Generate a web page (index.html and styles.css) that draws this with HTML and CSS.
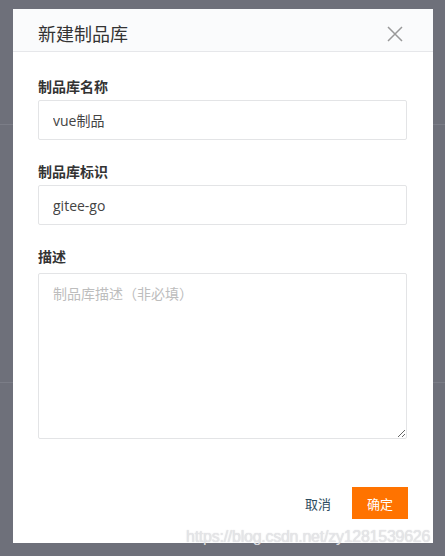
FILE: index.html
```html
<!DOCTYPE html>
<html lang="zh-CN">
<head>
<meta charset="utf-8">
<title>新建制品库</title>
<link rel="stylesheet" href="styles.css">
</head>
<body>
<div class="backdrop">
  <div class="bg-line bg-line-1"></div>
  <div class="bg-line bg-line-2"></div>
  <div class="modal">
    <div class="modal-header">
      <span class="modal-title">新建制品库</span>
      <span class="close" aria-label="关闭">
        <svg width="16" height="16" viewBox="0 0 16 16"><path d="M1 1L15 15M15 1L1 15" stroke="#999" stroke-width="1.5" fill="none"/></svg>
      </span>
    </div>
    <div class="modal-body">
      <div class="field">
        <label class="label">制品库名称</label>
        <input class="input" type="text" value="vue制品">
      </div>
      <div class="field">
        <label class="label">制品库标识</label>
        <input class="input" type="text" value="gitee-go">
      </div>
      <div class="field">
        <label class="label label-desc">描述</label>
        <textarea class="textarea" placeholder="制品库描述（非必填）"></textarea>
      </div>
    </div>
    <div class="modal-footer">
      <button class="btn btn-cancel">取消</button>
      <button class="btn btn-ok">确定</button>
    </div>
  </div>
  <div class="watermark">https://blog.csdn.net/zy1281539626</div>
</div>
</body>
</html>
```
FILE: styles.css
```css
html, body {
  margin: 0;
  padding: 0;
}
body {
  font-family: "Open Sans", "Noto Sans CJK SC", sans-serif;
  width: 445px;
  height: 556px;
  overflow: hidden;
}
.backdrop {
  position: relative;
  width: 445px;
  height: 556px;
  background: #6e707a;
  padding: 9px 0 0 13px;
  box-sizing: border-box;
}
.bg-line {
  position: absolute;
  left: 0;
  right: 0;
  height: 1px;
  background: #7b7d87;
}
.bg-line-1 { top: 124px; }
.bg-line-2 { top: 382px; }
.modal {
  position: relative;
  width: 420px;
  height: 534px;
  background: #fff;
  display: flex;
  flex-direction: column;
}
.modal-header {
  height: 43px;
  box-sizing: border-box;
  padding: 7px 30px 0 25px;
  background: #fafbfc;
  border-bottom: 1px solid #e6e7ea;
  display: flex;
  align-items: center;
  justify-content: space-between;
}
.modal-title {
  font-size: 18px;
  color: #333;
  line-height: 24px;
}
.close {
  display: flex;
  width: 16px;
  height: 16px;
}
.modal-body {
  padding: 25px 26px 0 25px;
  flex: 1;
}
.field {
  display: flex;
  flex-direction: column;
  margin-bottom: 22px;
}
.label {
  font-size: 14px;
  font-weight: bold;
  color: #333;
  line-height: 20px;
  margin-bottom: 3px;
}
.label-desc {
  margin-bottom: 6px;
}
.input {
  height: 40px;
  box-sizing: border-box;
  border: 1px solid #e3e4e6;
  border-radius: 2px;
  padding: 0 14px;
  font-family: "Open Sans", "Noto Sans CJK SC", sans-serif;
  font-size: 14px;
  color: #444;
  outline: none;
}
.textarea {
  height: 166px;
  box-sizing: border-box;
  border: 1px solid #e3e4e6;
  border-radius: 2px;
  padding: 9px 14px;
  font-family: "Open Sans", "Noto Sans CJK SC", sans-serif;
  font-size: 14px;
  color: #444;
  outline: none;
  resize: vertical;
}
.textarea::placeholder {
  color: #bdbdbd;
}
.modal-footer {
  display: flex;
  justify-content: flex-end;
  align-items: center;
  gap: 12px;
  padding: 0 25px 24px;
}
.btn {
  height: 32px;
  border: none;
  font-family: "Noto Sans CJK SC", sans-serif;
  font-size: 13px;
  cursor: pointer;
  padding: 0;
}
.btn-cancel {
  background: transparent;
  color: #2e4c60;
  width: 44px;
}
.btn-ok {
  width: 56px;
  background: #ff7300;
  color: #fff;
}
.watermark {
  position: absolute;
  left: 186px;
  top: 528px;
  font-family: "Liberation Sans", sans-serif;
  font-size: 16px;
  color: rgba(232, 232, 235, 0.9);
  text-shadow: 0 0 1px rgba(150, 150, 155, 0.5);
  white-space: nowrap;
  letter-spacing: -0.25px;
}
```
